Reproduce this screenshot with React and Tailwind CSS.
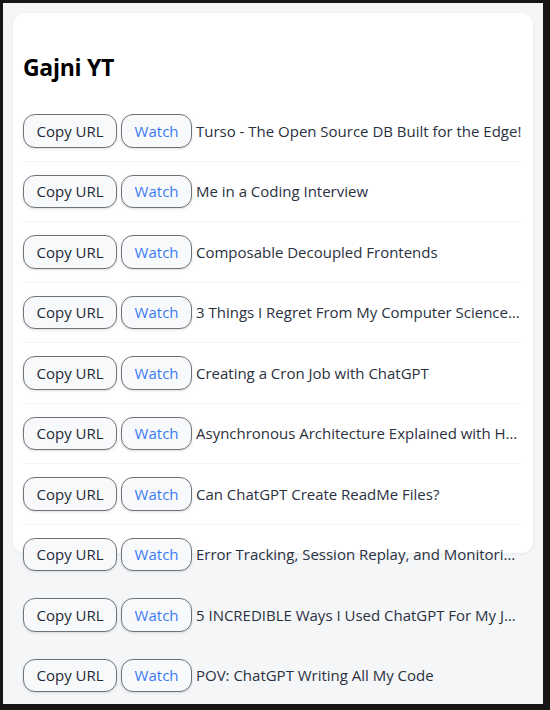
import React from "react";

const videos = [
  "Turso - The Open Source DB Built for the Edge!",
  "Me in a Coding Interview",
  "Composable Decoupled Frontends",
  "3 Things I Regret From My Computer Science Degree",
  "Creating a Cron Job with ChatGPT",
  "Asynchronous Architecture Explained with Homemade Pizza",
  "Can ChatGPT Create ReadMe Files?",
  "Error Tracking, Session Replay, and Monitoring for Web Apps",
  "5 INCREDIBLE Ways I Used ChatGPT For My Job as a Developer",
  "POV: ChatGPT Writing All My Code",
];

function Row({ title }) {
  return (
    <div className="flex h-[60.5px] items-center gap-1 border-b border-[#f4f5f7]">
      <button className="h-[33.5px] shrink-0 rounded-[12px] border border-[#6f7378] bg-[#f8f9fb] px-[12.5px] text-[15px] text-[#1f2937] shadow-sm">
        Copy URL
      </button>
      <button className="h-[33.5px] shrink-0 rounded-[12px] border border-[#6f7378] bg-[#f8f9fb] px-[12.5px] text-[15px] text-[#3b7bf6] shadow-sm">
        Watch
      </button>
      <span className="min-w-0 flex-1 truncate text-[15px] tracking-[-0.01px] text-[#2a3140]">{title}</span>
    </div>
  );
}

export default function App() {
  return (
    <div
      className="h-[710px] w-[550px] overflow-hidden bg-[#161616] pl-[3px] pt-[3px]"
      style={{ fontFamily: '"Open Sans", "Noto Sans", sans-serif' }}
    >
      <div className="h-[701px] w-[540px] overflow-hidden bg-[#f5f6f8] pl-[10px] pt-[10px]">
        <div className="h-[540px] w-[520px] rounded-[12px] bg-white px-[10px] pt-[38px] shadow-[0_1px_4px_rgba(0,0,0,0.06)]">
          <h1 className="mb-[18px] h-8 text-[23px] font-bold leading-8 tracking-[-0.3px] text-black">Gajni YT</h1>
          {videos.map((v) => (
            <Row key={v} title={v} />
          ))}
        </div>
      </div>
    </div>
  );
}
